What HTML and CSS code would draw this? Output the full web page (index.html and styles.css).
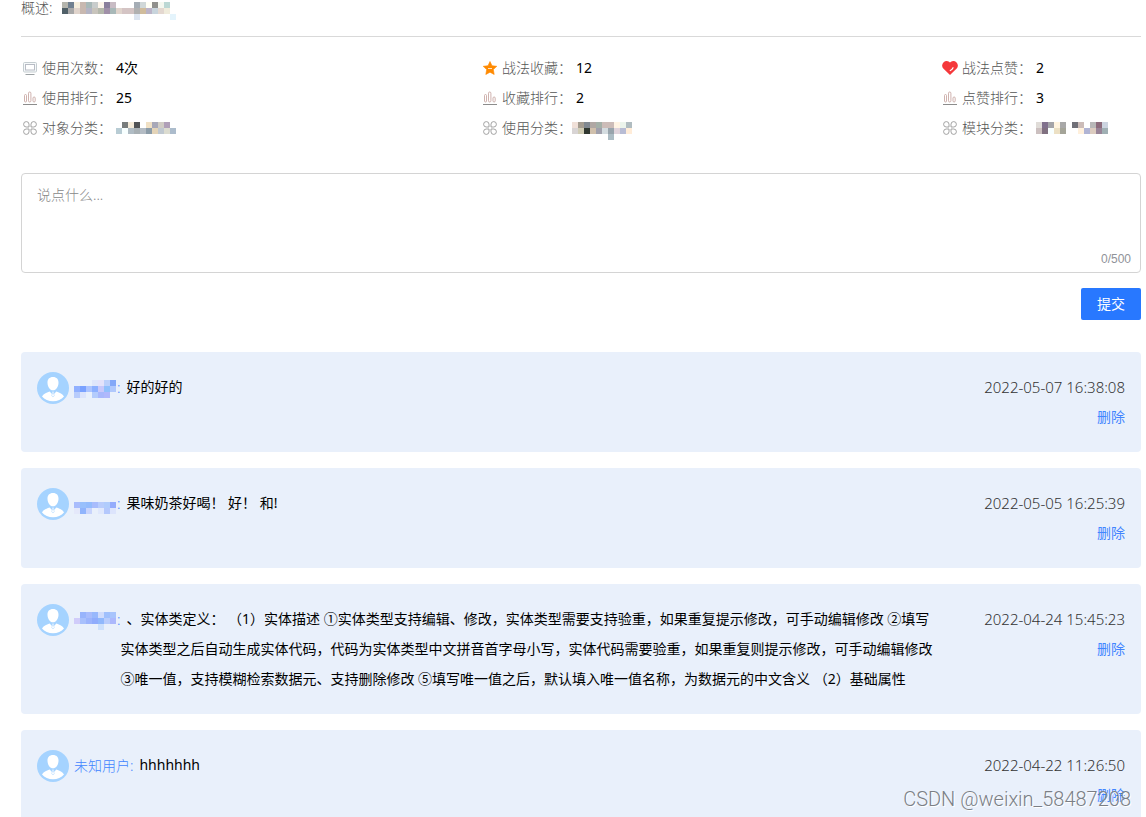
FILE: index.html
```html
<!DOCTYPE html>
<html lang="zh-CN">
<head>
    <meta charset="UTF-8">
    <meta name="viewport" content="width=device-width, initial-scale=1.0">
    <title>战法详情</title>
    <link rel="stylesheet" href="styles.css">
</head>
<body>
    <!-- shared icons -->
    <svg class="sprite" aria-hidden="true">
        <symbol id="icon-screen" viewBox="0 0 14 14">
            <rect x="0.5" y="1.5" width="13" height="9.5" rx="1" fill="#f6f9fa" stroke="#c4ccd0"/>
            <rect x="2.5" y="3.5" width="9" height="5.5" fill="#fff" stroke="#b8bcc5"/>
            <path d="M2.5 13.5h9" stroke="#9ca2a5"/>
        </symbol>
        <symbol id="icon-rank" viewBox="0 0 14 14">
            <g fill="#fff" stroke="#c9a9a5" stroke-width="0.9">
                <rect x="1.5" y="3.5" width="2" height="7.5" rx="1"/>
                <rect x="5.5" y="1" width="2.4" height="10" rx="1.2"/>
                <rect x="10" y="6" width="2.2" height="5" rx="1.1"/>
            </g>
            <path d="M0 13.5h14" stroke="#8c8c8c"/>
        </symbol>
        <symbol id="icon-group" viewBox="0 0 14 14">
            <g fill="none" stroke="#999" stroke-width="0.9">
                <path d="M6 6H3.2A2.7 2.7 0 1 1 6 3.2z"/>
                <path d="M8 6V3.2A2.7 2.7 0 1 1 10.8 6z"/>
                <path d="M6 8v2.8A2.7 2.7 0 1 1 3.2 8z"/>
                <path d="M8 8h2.8A2.7 2.7 0 1 1 8 10.8z"/>
            </g>
        </symbol>
        <symbol id="icon-star" viewBox="0 0 14 14">
            <path d="M7 0.5l2 4.2 4.8 0.6-3.5 3.3 0.9 4.9L7 11.2l-4.2 2.3 0.9-4.9L0.2 5.3 5 4.7z" fill="#ff8a00" stroke="#ff8a00" stroke-width="0.6" stroke-linejoin="round"/>
            <path d="M5 7.500h4" stroke="#ffe3c0" stroke-width="1"/>
        </symbol>
        <symbol id="icon-heart" viewBox="0 0 16 14">
            <path d="M8 14L1.3 7.6A4.4 4.4 0 0 1 8 1.6a4.4 4.4 0 0 1 6.700 6z" fill="#f5383b"/>
            <path d="M8.300 9.500c1.400-0.600 2.200-1.400 2.700-2.700" fill="none" stroke="#fff" stroke-width="1.300" stroke-linecap="round"/>
        </symbol>
        <symbol id="icon-user" viewBox="0 0 32 32">
            <circle cx="16" cy="16" r="16" fill="#a5d3ff"/>
            <path d="M16 5c3.6 0 5.7 2.3 5.5 6-0.2 3.8-2.3 7.3-5.5 7.3S10.7 14.8 10.5 11C10.3 7.3 12.4 5 16 5z" fill="#fff"/>
            <path d="M5 24.4c1.5-2.7 4-3.7 7.6-4.9L16 23l3.4-3.5c3.6 1.2 6.1 2.2 7.6 4.9-2.5 3.2-6.5 4.8-11 4.8S7.5 27.6 5 24.4z" fill="#fff"/>
            <path d="M15 19.5h2l-0.4 1.700 0.700 2.600L16 25l-1.300-1.200 0.700-2.600z" fill="#fff" stroke="#a5d3ff" stroke-width="0.500"/>
        </symbol>
    </svg>

    <main class="detail">
        <div class="overview">
            <span class="label">概述:</span>
            <svg class="mosaic" data-cells="b5b5ad 708090 f5eedd c8b8b0 a8b8b8 c8cccc fcf4ea 8a7f9c c8bcc4 - - - a5adb5 d0d8d8 fffff5 90908c f5f8f0 bcd8d4/506068 a8a8a8 e0d4cc c8b8b0 b4b4c4 c8c4bc b4b8ac a090a8 a8b8b8 e0d4cc d4c4c4 d4c4c4 b0b0b0 d0bc9c bcb4c8 c8d4dc e4d8d0 f0ecdc/- - - - - - - - - - - - dce4f0 - - - - - e4f4fc"></svg>
        </div>

        <div class="stats">
            <div class="stat">
                <svg class="icon"><use href="#icon-screen"/></svg>
                <span class="label">使用次数：</span><span class="value">4次</span>
            </div>
            <div class="stat">
                <svg class="icon"><use href="#icon-star"/></svg>
                <span class="label">战法收藏：</span><span class="value">12</span>
            </div>
            <div class="stat">
                <svg class="icon icon-wide"><use href="#icon-heart"/></svg>
                <span class="label">战法点赞：</span><span class="value">2</span>
            </div>
            <div class="stat">
                <svg class="icon"><use href="#icon-rank"/></svg>
                <span class="label">使用排行：</span><span class="value">25</span>
            </div>
            <div class="stat">
                <svg class="icon"><use href="#icon-rank"/></svg>
                <span class="label">收藏排行：</span><span class="value">2</span>
            </div>
            <div class="stat">
                <svg class="icon"><use href="#icon-rank"/></svg>
                <span class="label">点赞排行：</span><span class="value">3</span>
            </div>
            <div class="stat">
                <svg class="icon"><use href="#icon-group"/></svg>
                <span class="label">对象分类：</span>
                <svg class="mosaic value" data-cells="- 787c7c f4ead8 505254 - f0e0c4 a8a8b8 d0ccc4 b0a0b8 -/b8ccd4 f8ffff b0bcc4 a8b0b4 b4bcc4 8c9ca8 e4d4b8 c0c8d0 dcdcd0 acbccc"></svg>
            </div>
            <div class="stat">
                <svg class="icon"><use href="#icon-group"/></svg>
                <span class="label">使用分类：</span>
                <svg class="mosaic" data-cells="f0e0d8 a49c90 808890 b0a8a4 a4b0a8 ccbcb8 ccbcb8 fff4e4 ecf4ec b0bcc0/d8d4d4 d0ccb4 303830 d0c0ac a0a0ac d4dce0 98a4ac e0d4dc b8bcd4 ffecd8/- - - - - - acbcc4"></svg>
            </div>
            <div class="stat">
                <svg class="icon"><use href="#icon-group"/></svg>
                <span class="label">模块分类：</span>
                <svg class="mosaic value" data-cells="e0dcd8 80708c a4a4a8 fff4e0 a8a8a8 - 707078 ccbcb8 - b8b8b8 8c6c7c ccd4e0/ccc0c0 807080 f8ffff ece0c4 a4a498 - - fff0dc b0b4d4 dcccc0 988498 a0b0b4"></svg>
            </div>
        </div>

        <form class="comment-form">
            <div class="comment-box">
                <textarea placeholder="说点什么..." maxlength="500" aria-label="评论内容"></textarea>
                <span class="counter">0/500</span>
            </div>
            <button type="button">提交</button>
        </form>

        <div class="comment">
            <svg class="avatar"><use href="#icon-user"/></svg>
            <div class="user"><svg class="mosaic" data-cells="- - - dfe6fb e4e2fa bcd0fb 84a8f8/90b0ff 7aa2ff acc4ff 8cb0ff c8c8fa 90c0fc b0c8fc/b8ccfc dce4fc - b4ccfc a8b8fc b0b8fc -"></svg>:</div>
            <p class="message">好的好的</p>
            <div class="meta">
                <time>2022-05-07 16:38:08</time>
                <a href="#">删除</a>
            </div>
        </div>

        <div class="comment">
            <svg class="avatar"><use href="#icon-user"/></svg>
            <div class="user"><svg class="mosaic" data-cells="/a8bcfc 98c0fc 94bcfc a8bcfc b8ccfc b0ccfc 94acfc/e4e8fa 90b4fc c8d4fc - e0e8fc b4c8fc dce4fc"></svg>:</div>
            <p class="message">果味奶茶好喝！ 好！ 和!</p>
            <div class="meta">
                <time>2022-05-05 16:25:39</time>
                <a href="#">删除</a>
            </div>
        </div>

        <div class="comment">
            <svg class="avatar"><use href="#icon-user"/></svg>
            <div class="user"><svg class="mosaic" data-cells="- 98b4fc a8bcfc 98b8fc d0dcfc a0c0fc a8c4fc/d0ccfa a8c0fc 9cb4fc 90acfc 90b8fc b8ccfc acb8fc/- - - - cce0fc - -"></svg>:</div>
            <p class="message">、实体类定义： （1）实体描述 ①实体类型支持编辑、修改，实体类型需要支持验重，如果重复提示修改，可手动编辑修改 ②填写实体类型之后自动生成实体代码，代码为实体类型中文拼音首字母小写，实体代码需要验重，如果重复则提示修改，可手动编辑修改 ③唯一值，支持模糊检索数据元、支持删除修改 ⑤填写唯一值之后，默认填入唯一值名称，为数据元的中文含义 （2）基础属性</p>
            <div class="meta">
                <time>2022-04-24 15:45:23</time>
                <a href="#">删除</a>
            </div>
        </div>

        <div class="comment">
            <svg class="avatar"><use href="#icon-user"/></svg>
            <div class="user">未知用户:</div>
            <p class="message">hhhhhhh</p>
            <div class="meta">
                <time>2022-04-22 11:26:50</time>
                <a href="#">删除</a>
            </div>
        </div>
    </main>

    <div class="watermark">CSDN @weixin_58487208</div>

    <script src="mosaic.js"></script>
</body>
</html>
```
FILE: styles.css
```css
* {
    box-sizing: border-box;
}

body {
    margin: 0;
    height: 100vh;
    overflow: hidden;
    position: relative;
    font-family: 'Noto Sans', 'Noto Sans CJK SC', sans-serif;
    font-size: 14px;
    color: #000;
    background: #fff;
}

.sprite {
    display: none;
}

.detail {
    margin: 0 5px 0 21px;
}

.label {
    color: #555;
    font-weight: 300;
}

.mosaic {
    display: block;
    flex: none;
    height: 12px;
    overflow: visible;
}

.overview {
    display: flex;
    align-items: center;
    gap: 10px;
    line-height: 16px;
    padding-bottom: 20px;
    border-bottom: 1px solid #d9d9d9;
}

/* counters */
.stats {
    display: grid;
    grid-template-columns: 23fr 23fr 10fr;
    padding-top: 16px;
}

.stat {
    display: flex;
    align-items: center;
    height: 30px;
    line-height: 30px;
    padding-left: 2px;
    white-space: nowrap;
}

.icon {
    width: 14px;
    height: 14px;
    margin-right: 5px;
}

.icon-wide {
    width: 16px;
    margin-left: -1px;
    margin-right: 4px;
}

.value {
    margin-left: 4px;
}

/* comment form */
.comment-form {
    display: flex;
    flex-direction: column;
    align-items: flex-end;
    gap: 15px;
    margin: 30px 0 32px;
}

.comment-box {
    position: relative;
    width: 100%;
}

textarea {
    display: block;
    width: 100%;
    height: 100px;
    padding: 10px 15px;
    border: 1px solid #d4d4d4;
    border-radius: 4px;
    font: inherit;
    line-height: 22px;
    resize: none;
    outline: none;
}

textarea::placeholder {
    color: #888;
    font-weight: 300;
    opacity: 1;
}

.counter {
    position: absolute;
    right: 10px;
    bottom: 6px;
    font-family: 'Liberation Sans', Arial, sans-serif;
    font-size: 12px;
    line-height: 16px;
    color: #909399;
}

button {
    width: 60px;
    height: 32px;
    padding: 0 0 2px;
    border: none;
    border-radius: 2px;
    font: inherit;
    color: #fff;
    background: #2878ff;
    cursor: pointer;
}

/* comment list */
.comment {
    display: flex;
    align-items: flex-start;
    min-height: 100px;
    margin-bottom: 16px;
    padding: 20px 16px;
    border-radius: 4px;
    background: #e9f0fb;
    line-height: 30px;
}

.avatar {
    flex: none;
    width: 32px;
    height: 32px;
    margin-right: 5px;
}

.user {
    display: flex;
    flex: none;
    align-items: center;
    height: 32px;
    color: #4285ff;
    font-weight: 300;
}

.user .mosaic {
    height: 16px;
    margin-right: 1px;
}

.message {
    flex: 1;
    margin: 0;
    text-indent: 6px;
}

.meta {
    display: flex;
    flex: none;
    flex-direction: column;
    align-items: flex-end;
    width: 190px;
}

.meta time {
    font-size: 15px;
    font-weight: 300;
    color: #333;
}

.meta a {
    color: #4285ff;
    text-decoration: none;
}

.watermark {
    position: absolute;
    right: 15px;
    bottom: 6px;
    font-family: Roboto, sans-serif;
    font-size: 20px;
    font-weight: 300;
    line-height: 24px;
    color: #7b7f86;
    text-shadow: 1px 1px 0 #fff;
}
```
FILE: mosaic.js
```js
// fills each hidden name with 6px colour blocks, rows separated by "/"
const SIZE = 6;

document.querySelectorAll('.mosaic').forEach(svg => {
    let cols = 0;
    svg.dataset.cells.split('/').forEach((row, y) => {
        const cells = row.split(' ').filter(Boolean);
        if (y < 2) cols = Math.max(cols, cells.length);
        cells.forEach((color, x) => {
            if (color === '-') return;
            const rect = document.createElementNS('http://www.w3.org/2000/svg', 'rect');
            rect.setAttribute('x', x * SIZE);
            rect.setAttribute('y', y * SIZE);
            rect.setAttribute('width', SIZE);
            rect.setAttribute('height', SIZE);
            rect.setAttribute('fill', '#' + color);
            svg.appendChild(rect);
        });
    });
    svg.setAttribute('width', cols * SIZE);
});
```
